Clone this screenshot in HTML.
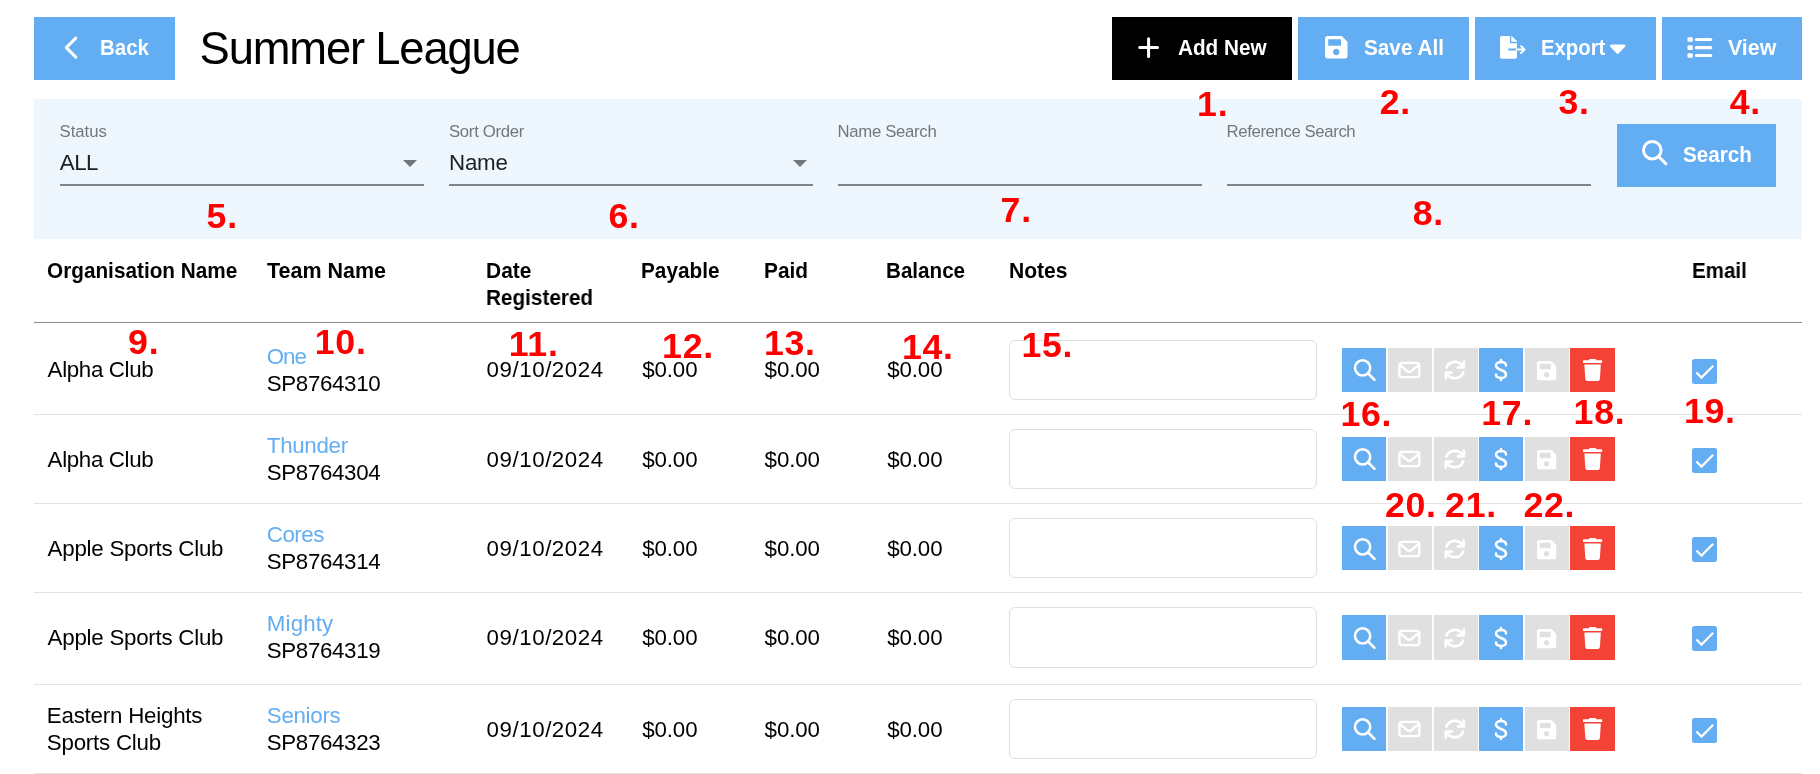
<!DOCTYPE html>
<html lang="en">
<head>
<meta charset="utf-8">
<title>Summer League</title>
<style>
html,body{margin:0;padding:0;background:#fff;}
body{width:1820px;height:774px;position:relative;overflow:hidden;font-family:"Liberation Sans",sans-serif;color:#000;}
#app{position:absolute;left:0;top:0;width:1820px;height:774px;will-change:transform;}
#app *{box-sizing:border-box;}
.toolbar,.filters,.grid,.thead,.row,.field,.t,.btn,.ib,.ta,.cb,.inp,.ul,.ann,svg{position:absolute;margin:0;padding:0;}
.t{white-space:pre;font-weight:400;display:block;transform-origin:0 0;}
button{border:0;font:inherit;color:inherit;text-align:left;overflow:visible;border-radius:0;cursor:pointer;}
.btn{background:#63adf2;color:#fff;height:63px;top:17px;}
.btn.dark{background:#000;}
.toolbar{left:0;top:0;width:1820px;height:99px;}
.filters{left:34px;top:99px;width:1768px;height:140px;background:#eef6fe;}
.field{top:0;width:364px;height:140px;}
.ul{left:0;top:85px;width:364px;height:2px;background:#81868b;}
.inp{left:0;top:48px;width:364px;height:39px;border:0;border-bottom:2px solid #81868b;background:transparent;outline:0;font:inherit;}
.grid{left:34px;top:239px;width:1768px;height:535px;}
.thead{left:0;top:0;width:1768px;height:84px;border-bottom:1px solid #8c8c8c;}
.row{left:0;width:1768px;border-bottom:1px solid #e2e2e2;}
.ib{width:44px;} .ib.b{background:#63adf2;} .ib.g{background:#e0e0e0;} .ib.r{background:#f44336;}
.ta{left:975px;width:308px;border:1px solid #dedede;border-radius:6px;background:#fff;resize:none;overflow:hidden;outline:0;font:inherit;}
.cb{left:1658px;width:25px;height:25px;border-radius:2.5px;background:#63adf2;}
.link{color:#63adf2;text-decoration:none;}
.ann{white-space:pre;font-weight:700;font-size:35.7px;line-height:42px;color:#ff0000;letter-spacing:0.7px;}
svg{overflow:visible;display:block;}
</style>
</head>
<body>
<div id="app">

<header class="toolbar">
<button type="button" class="btn" style="left:34px;width:141px"><svg aria-hidden="true" style="left:0;top:0" width="1" height="1"><g transform="translate(-34 -17)"><path d="M75.8 38.1L66.3 47.6L75.8 57.1" fill="none" stroke="#fff" stroke-width="3" stroke-linecap="round" stroke-linejoin="round"/></g></svg><span class="t" style="left:66.20px;top:17px;font-size:22.31px;line-height:27px;transform:scaleX(0.9197);font-weight:700">Back</span></button>
<h1 class="t" style="left:199.60px;top:22px;font-size:45.32px;line-height:53px;letter-spacing:-1.156px">Summer League</h1>
<button type="button" class="btn dark" style="left:1112px;width:180px"><svg aria-hidden="true" style="left:0;top:0" width="1" height="1"><g transform="translate(-1112 -17)"><path d="M1139.7 47.6H1157.5M1148.6 38.7V56.5" fill="none" stroke="#fff" stroke-width="3" stroke-linecap="round"/></g></svg><span class="t" style="left:65.80px;top:17px;font-size:22.31px;line-height:27px;transform:scaleX(0.9287);font-weight:700">Add New</span></button>
<button type="button" class="btn" style="left:1298px;width:171px"><svg aria-hidden="true" style="left:27.20px;top:19.20px" width="22.50" height="22.50" viewBox="0 32 448 448"><path fill="#fff" d="M433.941 129.941l-83.882-83.882A48 48 0 0 0 316.118 32H48C21.49 32 0 53.49 0 80v352c0 26.51 21.49 48 48 48h352c26.51 0 48-21.49 48-48V163.882a48 48 0 0 0-14.059-33.941zM224 416c-35.346 0-64-28.654-64-64 0-35.346 28.654-64 64-64s64 28.654 64 64c0 35.346-28.654 64-64 64zm96-304.52V212c0 6.627-5.373 12-12 12H76c-6.627 0-12-5.373-12-12V108c0-6.627 5.373-12 12-12h228.52c3.183 0 6.235 1.264 8.485 3.515l3.48 3.48A11.996 11.996 0 0 1 320 111.48z"/></svg><span class="t" style="left:66.00px;top:17px;font-size:22.31px;line-height:27px;transform:scaleX(0.9302);font-weight:700">Save All</span></button>
<button type="button" class="btn" style="left:1475px;width:181px"><svg aria-hidden="true" style="left:24.90px;top:19.10px" width="25.40" height="22.80" viewBox="0 0 576 512"><path fill="#fff" d="M40 0H224V136a24 24 0 0 0 24 24H384V280H200a16 16 0 0 0-16 16v16a16 16 0 0 0 16 16H384V472a40 40 0 0 1-40 40H40a40 40 0 0 1-40-40V40A40 40 0 0 1 40 0z"/><path fill="#fff" d="M256 0h6a24 24 0 0 1 17 7L377 105a24 24 0 0 1 7 17V128H256z"/><path fill="none" stroke="#fff" stroke-width="44" stroke-linecap="round" stroke-linejoin="round" d="M384 304H540M478 226L556 304L478 382"/></svg><svg aria-hidden="true" style="left:0;top:0" width="1" height="1"><g transform="translate(-1475 -17)"><path d="M1611.2 44.6H1624.1a1.3 1.3 0 0 1 .95 2.2L1618.6 53.6a1.4 1.4 0 0 1-1.9 0L1610.25 46.8a1.3 1.3 0 0 1 .95-2.2z" fill="#fff"/></g></svg><span class="t" style="left:66.00px;top:17px;font-size:22.31px;line-height:27px;transform:scaleX(0.9119);font-weight:700">Export</span></button>
<button type="button" class="btn" style="left:1662px;width:140px"><svg aria-hidden="true" style="left:0;top:0" width="1" height="1"><g transform="translate(-1662 -17)"><rect x="1687.5" y="37.15" width="5.3" height="4.7" rx="1.2" fill="#fff"/><rect x="1694.8" y="37.90" width="17.5" height="3.2" rx="1.6" fill="#fff"/><rect x="1687.5" y="45.35" width="5.3" height="4.7" rx="1.2" fill="#fff"/><rect x="1694.8" y="46.10" width="17.5" height="3.2" rx="1.6" fill="#fff"/><rect x="1687.5" y="53.15" width="5.3" height="4.7" rx="1.2" fill="#fff"/><rect x="1694.8" y="53.90" width="17.5" height="3.2" rx="1.6" fill="#fff"/></g></svg><span class="t" style="left:66.20px;top:17px;font-size:22.31px;line-height:27px;transform:scaleX(0.9566);font-weight:700">View</span></button>
</header>
<section class="filters">
<div class="field" style="left:26px">
<label class="t" style="left:-0.40px;top:22px;font-size:16.73px;line-height:21px;letter-spacing:-0.036px;color:#74787c">Status</label>
<span class="t val" role="combobox" style="left:-0.20px;top:50px;font-size:22.31px;line-height:27px;letter-spacing:-0.542px;color:#1d1f21">ALL</span>
<svg aria-hidden="true" style="left:0;top:0" width="1" height="1"><g transform="translate(-60 -99)"><path d="M403 160h14l-7 7z" fill="#71767b"/></g></svg>
<div class="ul"></div>
</div>
<div class="field" style="left:415px">
<label class="t" style="left:0.00px;top:22px;font-size:16.73px;line-height:21px;letter-spacing:-0.291px;color:#74787c">Sort Order</label>
<span class="t val" role="combobox" style="left:0.00px;top:50px;font-size:22.31px;line-height:27px;letter-spacing:-0.215px;color:#1d1f21">Name</span>
<svg aria-hidden="true" style="left:0;top:0" width="1" height="1"><g transform="translate(-449 -99)"><path d="M793 160h14l-7 7z" fill="#71767b"/></g></svg>
<div class="ul"></div>
</div>
<div class="field" style="left:804px">
<label class="t" style="left:-0.40px;top:22px;font-size:16.73px;line-height:21px;letter-spacing:-0.315px;color:#74787c">Name Search</label>
<input class="inp" type="text" value="">
</div>
<div class="field" style="left:1193px">
<label class="t" style="left:-0.40px;top:22px;font-size:16.73px;line-height:21px;letter-spacing:-0.380px;color:#74787c">Reference Search</label>
<input class="inp" type="text" value="">
</div>
<button type="button" class="btn" style="left:1583px;top:25px;width:159px"><svg aria-hidden="true" style="left:0;top:0" width="1" height="1"><g transform="translate(-1617 -124)"><circle cx="1652.3" cy="150.2" r="8.8" fill="none" stroke="#fff" stroke-width="3"/><path d="M1658.7 156.6L1665.9 163.8" stroke="#fff" stroke-width="3" stroke-linecap="round"/></g></svg><span class="t" style="left:65.60px;top:17px;font-size:22.31px;line-height:27px;transform:scaleX(0.9256);font-weight:700">Search</span></button>
</section>
<div class="grid" role="table">
<div class="thead" role="row">
<span class="t" role="columnheader" style="left:12.60px;top:18px;font-size:22.31px;line-height:27px;transform:scaleX(0.9308);font-weight:700">Organisation Name</span>
<span class="t" role="columnheader" style="left:232.60px;top:18px;font-size:22.31px;line-height:27px;transform:scaleX(0.9639);font-weight:700">Team Name</span>
<span class="t" role="columnheader" style="left:452.40px;top:18px;font-size:22.31px;line-height:27px;transform:scaleX(0.9395);font-weight:700">Date</span>
<span class="t" role="columnheader" style="left:607.40px;top:18px;font-size:22.31px;line-height:27px;transform:scaleX(0.9307);font-weight:700">Payable</span>
<span class="t" role="columnheader" style="left:729.80px;top:18px;font-size:22.31px;line-height:27px;transform:scaleX(0.9353);font-weight:700">Paid</span>
<span class="t" role="columnheader" style="left:852.40px;top:18px;font-size:22.31px;line-height:27px;transform:scaleX(0.9247);font-weight:700">Balance</span>
<span class="t" role="columnheader" style="left:974.60px;top:18px;font-size:22.31px;line-height:27px;transform:scaleX(0.9455);font-weight:700">Notes</span>
<span class="t" role="columnheader" style="left:1658.40px;top:18px;font-size:22.31px;line-height:27px;transform:scaleX(0.9220);font-weight:700">Email</span>
<span class="t" style="left:452.40px;top:45px;font-size:22.31px;line-height:27px;transform:scaleX(0.9295);font-weight:700">Registered</span>
</div>
<div class="row" role="row" style="top:84px;height:92px">
<span class="t" style="left:13.60px;top:33px;font-size:22.31px;line-height:27px;letter-spacing:-0.334px">Alpha Club</span>
<a class="t link" style="left:232.80px;top:20px;font-size:22.31px;line-height:27px;letter-spacing:-1.068px">One</a>
<span class="t" style="left:232.80px;top:47px;font-size:22.31px;line-height:27px;letter-spacing:-0.340px">SP8764310</span>
<span class="t" style="left:452.60px;top:33px;font-size:22.31px;line-height:27px;letter-spacing:0.548px">09/10/2024</span>
<span class="t" style="left:608.20px;top:33px;font-size:22.31px;line-height:27px;letter-spacing:-0.106px">$0.00</span>
<span class="t" style="left:730.60px;top:33px;font-size:22.31px;line-height:27px;letter-spacing:-0.106px">$0.00</span>
<span class="t" style="left:853.20px;top:33px;font-size:22.31px;line-height:27px;letter-spacing:-0.106px">$0.00</span>
<textarea class="ta" rows="2" style="top:17px;height:60px"></textarea>
<button type="button" class="ib b" aria-label="View" style="left:1308px;top:25px;width:44px;height:44px"><svg aria-hidden="true" style="left:0;top:0px" width="44" height="44"><circle cx="20.6" cy="19.9" r="7.6" fill="none" stroke="#fff" stroke-width="2.6"/><path d="M26.2 25.5L32.5 31.8" stroke="#fff" stroke-width="2.6" stroke-linecap="round"/></svg></button>
<button type="button" class="ib g" aria-label="Email" disabled style="left:1354px;top:25px;width:44px;height:44px"><svg aria-hidden="true" style="left:0;top:0px" width="44" height="44"><rect x="11.4" y="14.9" width="19.9" height="14.2" rx="2.4" fill="none" stroke="#fff" stroke-width="2.4"/><path d="M12.2 17.3L19.4 23.2Q21.4 24.8 23.3 23.2L30.5 17.3" fill="none" stroke="#fff" stroke-width="2.4" stroke-linejoin="round"/></svg></button>
<button type="button" class="ib g" aria-label="Refresh" disabled style="left:1400px;top:25px;width:44px;height:44px"><svg aria-hidden="true" style="left:0;top:0px" width="44" height="44"><g fill="none" stroke="#fff" stroke-width="2.7" stroke-linecap="round" stroke-linejoin="round"><path d="M12.4 19.6A9.1 9.1 0 0 1 28.4 17.8"/><path d="M29.8 13.6V19.4H24.0"/><path d="M29.2 24.4A9.1 9.1 0 0 1 13.2 26.2"/><path d="M11.8 30.4V24.6H17.6"/></g></svg></button>
<button type="button" class="ib b" aria-label="Payment" style="left:1445px;top:25px;width:44px;height:44px"><svg aria-hidden="true" style="left:0;top:0px" width="44" height="44"><g fill="none" stroke="#fff" stroke-width="2.5" stroke-linecap="round"><path d="M22.0 12.1V14.0M22.0 30.0V31.9"/><path d="M27.0 17.4C27.0 14.6 24.3 14.0 22.0 14.0C19.3 14.0 17.0 15.4 17.0 17.6C17.0 20.4 20.0 21.2 22.0 22.0C24.0 22.8 27.0 23.6 27.0 26.4C27.0 28.6 24.7 30.0 22.0 30.0C19.7 30.0 17.0 29.4 17.0 26.6"/></g></svg></button>
<button type="button" class="ib g" aria-label="Save" disabled style="left:1491px;top:25px;width:44px;height:44px"><svg aria-hidden="true" style="left:11.90px;top:12.70px" width="19.20" height="19.20" viewBox="0 32 448 448"><path fill="#fff" d="M433.941 129.941l-83.882-83.882A48 48 0 0 0 316.118 32H48C21.49 32 0 53.49 0 80v352c0 26.51 21.49 48 48 48h352c26.51 0 48-21.49 48-48V163.882a48 48 0 0 0-14.059-33.941zM224 416c-35.346 0-64-28.654-64-64 0-35.346 28.654-64 64-64s64 28.654 64 64c0 35.346-28.654 64-64 64zm96-304.52V212c0 6.627-5.373 12-12 12H76c-6.627 0-12-5.373-12-12V108c0-6.627 5.373-12 12-12h228.52c3.183 0 6.235 1.264 8.485 3.515l3.48 3.48A11.996 11.996 0 0 1 320 111.48z"/></svg></button>
<button type="button" class="ib r" aria-label="Delete" style="left:1536px;top:25px;width:45px;height:44px"><svg aria-hidden="true" style="left:12.90px;top:11.10px" width="19.20" height="21.90" viewBox="0 0 448 512"><path fill="#fff" d="M432 32H312l-9.4-18.7A24 24 0 0 0 281.1 0H166.8a23.72 23.72 0 0 0-21.4 13.3L136 32H16A16 16 0 0 0 0 48v32a16 16 0 0 0 16 16h416a16 16 0 0 0 16-16V48a16 16 0 0 0-16-16zM53.2 467a48 48 0 0 0 47.9 45h245.8a48 48 0 0 0 47.9-45L416 128H32z"/></svg></button>
<span class="cb" role="checkbox" aria-checked="true" style="top:36px"><svg aria-hidden="true" style="left:0;top:0" width="25" height="25"><path d="M4.4 13.4L9.5 18.6L21.2 6.8" fill="none" stroke="#fff" stroke-width="2.2"/></svg></span>
</div>
<div class="row" role="row" style="top:176px;height:89px">
<span class="t" style="left:13.60px;top:31px;font-size:22.31px;line-height:27px;letter-spacing:-0.334px">Alpha Club</span>
<a class="t link" style="left:232.80px;top:17px;font-size:22.31px;line-height:27px;letter-spacing:-0.286px">Thunder</a>
<span class="t" style="left:232.80px;top:44px;font-size:22.31px;line-height:27px;letter-spacing:-0.340px">SP8764304</span>
<span class="t" style="left:452.60px;top:31px;font-size:22.31px;line-height:27px;letter-spacing:0.548px">09/10/2024</span>
<span class="t" style="left:608.20px;top:31px;font-size:22.31px;line-height:27px;letter-spacing:-0.106px">$0.00</span>
<span class="t" style="left:730.60px;top:31px;font-size:22.31px;line-height:27px;letter-spacing:-0.106px">$0.00</span>
<span class="t" style="left:853.20px;top:31px;font-size:22.31px;line-height:27px;letter-spacing:-0.106px">$0.00</span>
<textarea class="ta" rows="2" style="top:14px;height:60px"></textarea>
<button type="button" class="ib b" aria-label="View" style="left:1308px;top:22px;width:44px;height:44px"><svg aria-hidden="true" style="left:0;top:0px" width="44" height="44"><circle cx="20.6" cy="19.9" r="7.6" fill="none" stroke="#fff" stroke-width="2.6"/><path d="M26.2 25.5L32.5 31.8" stroke="#fff" stroke-width="2.6" stroke-linecap="round"/></svg></button>
<button type="button" class="ib g" aria-label="Email" disabled style="left:1354px;top:22px;width:44px;height:44px"><svg aria-hidden="true" style="left:0;top:0px" width="44" height="44"><rect x="11.4" y="14.9" width="19.9" height="14.2" rx="2.4" fill="none" stroke="#fff" stroke-width="2.4"/><path d="M12.2 17.3L19.4 23.2Q21.4 24.8 23.3 23.2L30.5 17.3" fill="none" stroke="#fff" stroke-width="2.4" stroke-linejoin="round"/></svg></button>
<button type="button" class="ib g" aria-label="Refresh" disabled style="left:1400px;top:22px;width:44px;height:44px"><svg aria-hidden="true" style="left:0;top:0px" width="44" height="44"><g fill="none" stroke="#fff" stroke-width="2.7" stroke-linecap="round" stroke-linejoin="round"><path d="M12.4 19.6A9.1 9.1 0 0 1 28.4 17.8"/><path d="M29.8 13.6V19.4H24.0"/><path d="M29.2 24.4A9.1 9.1 0 0 1 13.2 26.2"/><path d="M11.8 30.4V24.6H17.6"/></g></svg></button>
<button type="button" class="ib b" aria-label="Payment" style="left:1445px;top:22px;width:44px;height:44px"><svg aria-hidden="true" style="left:0;top:0px" width="44" height="44"><g fill="none" stroke="#fff" stroke-width="2.5" stroke-linecap="round"><path d="M22.0 12.1V14.0M22.0 30.0V31.9"/><path d="M27.0 17.4C27.0 14.6 24.3 14.0 22.0 14.0C19.3 14.0 17.0 15.4 17.0 17.6C17.0 20.4 20.0 21.2 22.0 22.0C24.0 22.8 27.0 23.6 27.0 26.4C27.0 28.6 24.7 30.0 22.0 30.0C19.7 30.0 17.0 29.4 17.0 26.6"/></g></svg></button>
<button type="button" class="ib g" aria-label="Save" disabled style="left:1491px;top:22px;width:44px;height:44px"><svg aria-hidden="true" style="left:11.90px;top:12.70px" width="19.20" height="19.20" viewBox="0 32 448 448"><path fill="#fff" d="M433.941 129.941l-83.882-83.882A48 48 0 0 0 316.118 32H48C21.49 32 0 53.49 0 80v352c0 26.51 21.49 48 48 48h352c26.51 0 48-21.49 48-48V163.882a48 48 0 0 0-14.059-33.941zM224 416c-35.346 0-64-28.654-64-64 0-35.346 28.654-64 64-64s64 28.654 64 64c0 35.346-28.654 64-64 64zm96-304.52V212c0 6.627-5.373 12-12 12H76c-6.627 0-12-5.373-12-12V108c0-6.627 5.373-12 12-12h228.52c3.183 0 6.235 1.264 8.485 3.515l3.48 3.48A11.996 11.996 0 0 1 320 111.48z"/></svg></button>
<button type="button" class="ib r" aria-label="Delete" style="left:1536px;top:22px;width:45px;height:44px"><svg aria-hidden="true" style="left:12.90px;top:11.10px" width="19.20" height="21.90" viewBox="0 0 448 512"><path fill="#fff" d="M432 32H312l-9.4-18.7A24 24 0 0 0 281.1 0H166.8a23.72 23.72 0 0 0-21.4 13.3L136 32H16A16 16 0 0 0 0 48v32a16 16 0 0 0 16 16h416a16 16 0 0 0 16-16V48a16 16 0 0 0-16-16zM53.2 467a48 48 0 0 0 47.9 45h245.8a48 48 0 0 0 47.9-45L416 128H32z"/></svg></button>
<span class="cb" role="checkbox" aria-checked="true" style="top:33px"><svg aria-hidden="true" style="left:0;top:0" width="25" height="25"><path d="M4.4 13.4L9.5 18.6L21.2 6.8" fill="none" stroke="#fff" stroke-width="2.2"/></svg></span>
</div>
<div class="row" role="row" style="top:265px;height:89px">
<span class="t" style="left:13.60px;top:31px;font-size:22.31px;line-height:27px;letter-spacing:-0.239px">Apple Sports Club</span>
<a class="t link" style="left:232.80px;top:17px;font-size:22.31px;line-height:27px;letter-spacing:-0.469px">Cores</a>
<span class="t" style="left:232.80px;top:44px;font-size:22.31px;line-height:27px;letter-spacing:-0.340px">SP8764314</span>
<span class="t" style="left:452.60px;top:31px;font-size:22.31px;line-height:27px;letter-spacing:0.548px">09/10/2024</span>
<span class="t" style="left:608.20px;top:31px;font-size:22.31px;line-height:27px;letter-spacing:-0.106px">$0.00</span>
<span class="t" style="left:730.60px;top:31px;font-size:22.31px;line-height:27px;letter-spacing:-0.106px">$0.00</span>
<span class="t" style="left:853.20px;top:31px;font-size:22.31px;line-height:27px;letter-spacing:-0.106px">$0.00</span>
<textarea class="ta" rows="2" style="top:14px;height:60px"></textarea>
<button type="button" class="ib b" aria-label="View" style="left:1308px;top:22px;width:44px;height:44px"><svg aria-hidden="true" style="left:0;top:0.9px" width="44" height="44"><circle cx="20.6" cy="19.9" r="7.6" fill="none" stroke="#fff" stroke-width="2.6"/><path d="M26.2 25.5L32.5 31.8" stroke="#fff" stroke-width="2.6" stroke-linecap="round"/></svg></button>
<button type="button" class="ib g" aria-label="Email" disabled style="left:1354px;top:22px;width:44px;height:44px"><svg aria-hidden="true" style="left:0;top:0.9px" width="44" height="44"><rect x="11.4" y="14.9" width="19.9" height="14.2" rx="2.4" fill="none" stroke="#fff" stroke-width="2.4"/><path d="M12.2 17.3L19.4 23.2Q21.4 24.8 23.3 23.2L30.5 17.3" fill="none" stroke="#fff" stroke-width="2.4" stroke-linejoin="round"/></svg></button>
<button type="button" class="ib g" aria-label="Refresh" disabled style="left:1400px;top:22px;width:44px;height:44px"><svg aria-hidden="true" style="left:0;top:0.9px" width="44" height="44"><g fill="none" stroke="#fff" stroke-width="2.7" stroke-linecap="round" stroke-linejoin="round"><path d="M12.4 19.6A9.1 9.1 0 0 1 28.4 17.8"/><path d="M29.8 13.6V19.4H24.0"/><path d="M29.2 24.4A9.1 9.1 0 0 1 13.2 26.2"/><path d="M11.8 30.4V24.6H17.6"/></g></svg></button>
<button type="button" class="ib b" aria-label="Payment" style="left:1445px;top:22px;width:44px;height:44px"><svg aria-hidden="true" style="left:0;top:0.9px" width="44" height="44"><g fill="none" stroke="#fff" stroke-width="2.5" stroke-linecap="round"><path d="M22.0 12.1V14.0M22.0 30.0V31.9"/><path d="M27.0 17.4C27.0 14.6 24.3 14.0 22.0 14.0C19.3 14.0 17.0 15.4 17.0 17.6C17.0 20.4 20.0 21.2 22.0 22.0C24.0 22.8 27.0 23.6 27.0 26.4C27.0 28.6 24.7 30.0 22.0 30.0C19.7 30.0 17.0 29.4 17.0 26.6"/></g></svg></button>
<button type="button" class="ib g" aria-label="Save" disabled style="left:1491px;top:22px;width:44px;height:44px"><svg aria-hidden="true" style="left:11.90px;top:13.60px" width="19.20" height="19.20" viewBox="0 32 448 448"><path fill="#fff" d="M433.941 129.941l-83.882-83.882A48 48 0 0 0 316.118 32H48C21.49 32 0 53.49 0 80v352c0 26.51 21.49 48 48 48h352c26.51 0 48-21.49 48-48V163.882a48 48 0 0 0-14.059-33.941zM224 416c-35.346 0-64-28.654-64-64 0-35.346 28.654-64 64-64s64 28.654 64 64c0 35.346-28.654 64-64 64zm96-304.52V212c0 6.627-5.373 12-12 12H76c-6.627 0-12-5.373-12-12V108c0-6.627 5.373-12 12-12h228.52c3.183 0 6.235 1.264 8.485 3.515l3.48 3.48A11.996 11.996 0 0 1 320 111.48z"/></svg></button>
<button type="button" class="ib r" aria-label="Delete" style="left:1536px;top:22px;width:45px;height:44px"><svg aria-hidden="true" style="left:12.90px;top:12.00px" width="19.20" height="21.90" viewBox="0 0 448 512"><path fill="#fff" d="M432 32H312l-9.4-18.7A24 24 0 0 0 281.1 0H166.8a23.72 23.72 0 0 0-21.4 13.3L136 32H16A16 16 0 0 0 0 48v32a16 16 0 0 0 16 16h416a16 16 0 0 0 16-16V48a16 16 0 0 0-16-16zM53.2 467a48 48 0 0 0 47.9 45h245.8a48 48 0 0 0 47.9-45L416 128H32z"/></svg></button>
<span class="cb" role="checkbox" aria-checked="true" style="top:33px"><svg aria-hidden="true" style="left:0;top:0" width="25" height="25"><path d="M4.4 13.4L9.5 18.6L21.2 6.8" fill="none" stroke="#fff" stroke-width="2.2"/></svg></span>
</div>
<div class="row" role="row" style="top:354px;height:92px">
<span class="t" style="left:13.60px;top:31px;font-size:22.31px;line-height:27px;letter-spacing:-0.239px">Apple Sports Club</span>
<a class="t link" style="left:232.80px;top:17px;font-size:22.31px;line-height:27px;letter-spacing:0.161px">Mighty</a>
<span class="t" style="left:232.80px;top:44px;font-size:22.31px;line-height:27px;letter-spacing:-0.340px">SP8764319</span>
<span class="t" style="left:452.60px;top:31px;font-size:22.31px;line-height:27px;letter-spacing:0.548px">09/10/2024</span>
<span class="t" style="left:608.20px;top:31px;font-size:22.31px;line-height:27px;letter-spacing:-0.106px">$0.00</span>
<span class="t" style="left:730.60px;top:31px;font-size:22.31px;line-height:27px;letter-spacing:-0.106px">$0.00</span>
<span class="t" style="left:853.20px;top:31px;font-size:22.31px;line-height:27px;letter-spacing:-0.106px">$0.00</span>
<textarea class="ta" rows="2" style="top:14px;height:61px"></textarea>
<button type="button" class="ib b" aria-label="View" style="left:1308px;top:22px;width:44px;height:45px"><svg aria-hidden="true" style="left:0;top:1px" width="44" height="44"><circle cx="20.6" cy="19.9" r="7.6" fill="none" stroke="#fff" stroke-width="2.6"/><path d="M26.2 25.5L32.5 31.8" stroke="#fff" stroke-width="2.6" stroke-linecap="round"/></svg></button>
<button type="button" class="ib g" aria-label="Email" disabled style="left:1354px;top:22px;width:44px;height:45px"><svg aria-hidden="true" style="left:0;top:1px" width="44" height="44"><rect x="11.4" y="14.9" width="19.9" height="14.2" rx="2.4" fill="none" stroke="#fff" stroke-width="2.4"/><path d="M12.2 17.3L19.4 23.2Q21.4 24.8 23.3 23.2L30.5 17.3" fill="none" stroke="#fff" stroke-width="2.4" stroke-linejoin="round"/></svg></button>
<button type="button" class="ib g" aria-label="Refresh" disabled style="left:1400px;top:22px;width:44px;height:45px"><svg aria-hidden="true" style="left:0;top:1px" width="44" height="44"><g fill="none" stroke="#fff" stroke-width="2.7" stroke-linecap="round" stroke-linejoin="round"><path d="M12.4 19.6A9.1 9.1 0 0 1 28.4 17.8"/><path d="M29.8 13.6V19.4H24.0"/><path d="M29.2 24.4A9.1 9.1 0 0 1 13.2 26.2"/><path d="M11.8 30.4V24.6H17.6"/></g></svg></button>
<button type="button" class="ib b" aria-label="Payment" style="left:1445px;top:22px;width:44px;height:45px"><svg aria-hidden="true" style="left:0;top:1px" width="44" height="44"><g fill="none" stroke="#fff" stroke-width="2.5" stroke-linecap="round"><path d="M22.0 12.1V14.0M22.0 30.0V31.9"/><path d="M27.0 17.4C27.0 14.6 24.3 14.0 22.0 14.0C19.3 14.0 17.0 15.4 17.0 17.6C17.0 20.4 20.0 21.2 22.0 22.0C24.0 22.8 27.0 23.6 27.0 26.4C27.0 28.6 24.7 30.0 22.0 30.0C19.7 30.0 17.0 29.4 17.0 26.6"/></g></svg></button>
<button type="button" class="ib g" aria-label="Save" disabled style="left:1491px;top:22px;width:44px;height:45px"><svg aria-hidden="true" style="left:11.90px;top:13.70px" width="19.20" height="19.20" viewBox="0 32 448 448"><path fill="#fff" d="M433.941 129.941l-83.882-83.882A48 48 0 0 0 316.118 32H48C21.49 32 0 53.49 0 80v352c0 26.51 21.49 48 48 48h352c26.51 0 48-21.49 48-48V163.882a48 48 0 0 0-14.059-33.941zM224 416c-35.346 0-64-28.654-64-64 0-35.346 28.654-64 64-64s64 28.654 64 64c0 35.346-28.654 64-64 64zm96-304.52V212c0 6.627-5.373 12-12 12H76c-6.627 0-12-5.373-12-12V108c0-6.627 5.373-12 12-12h228.52c3.183 0 6.235 1.264 8.485 3.515l3.48 3.48A11.996 11.996 0 0 1 320 111.48z"/></svg></button>
<button type="button" class="ib r" aria-label="Delete" style="left:1536px;top:22px;width:45px;height:45px"><svg aria-hidden="true" style="left:12.90px;top:12.10px" width="19.20" height="21.90" viewBox="0 0 448 512"><path fill="#fff" d="M432 32H312l-9.4-18.7A24 24 0 0 0 281.1 0H166.8a23.72 23.72 0 0 0-21.4 13.3L136 32H16A16 16 0 0 0 0 48v32a16 16 0 0 0 16 16h416a16 16 0 0 0 16-16V48a16 16 0 0 0-16-16zM53.2 467a48 48 0 0 0 47.9 45h245.8a48 48 0 0 0 47.9-45L416 128H32z"/></svg></button>
<span class="cb" role="checkbox" aria-checked="true" style="top:33px"><svg aria-hidden="true" style="left:0;top:0" width="25" height="25"><path d="M4.4 13.4L9.5 18.6L21.2 6.8" fill="none" stroke="#fff" stroke-width="2.2"/></svg></span>
</div>
<div class="row" role="row" style="top:446px;height:89px">
<span class="t" style="left:12.80px;top:17px;font-size:22.31px;line-height:27px;letter-spacing:-0.210px">Eastern Heights</span>
<span class="t" style="left:12.80px;top:44px;font-size:22.31px;line-height:27px;letter-spacing:-0.216px">Sports Club</span>
<a class="t link" style="left:232.80px;top:17px;font-size:22.31px;line-height:27px;letter-spacing:-0.288px">Seniors</a>
<span class="t" style="left:232.80px;top:44px;font-size:22.31px;line-height:27px;letter-spacing:-0.340px">SP8764323</span>
<span class="t" style="left:452.60px;top:31px;font-size:22.31px;line-height:27px;letter-spacing:0.548px">09/10/2024</span>
<span class="t" style="left:608.20px;top:31px;font-size:22.31px;line-height:27px;letter-spacing:-0.106px">$0.00</span>
<span class="t" style="left:730.60px;top:31px;font-size:22.31px;line-height:27px;letter-spacing:-0.106px">$0.00</span>
<span class="t" style="left:853.20px;top:31px;font-size:22.31px;line-height:27px;letter-spacing:-0.106px">$0.00</span>
<textarea class="ta" rows="2" style="top:14px;height:60px"></textarea>
<button type="button" class="ib b" aria-label="View" style="left:1308px;top:22px;width:44px;height:44px"><svg aria-hidden="true" style="left:0;top:0px" width="44" height="44"><circle cx="20.6" cy="19.9" r="7.6" fill="none" stroke="#fff" stroke-width="2.6"/><path d="M26.2 25.5L32.5 31.8" stroke="#fff" stroke-width="2.6" stroke-linecap="round"/></svg></button>
<button type="button" class="ib g" aria-label="Email" disabled style="left:1354px;top:22px;width:44px;height:44px"><svg aria-hidden="true" style="left:0;top:0px" width="44" height="44"><rect x="11.4" y="14.9" width="19.9" height="14.2" rx="2.4" fill="none" stroke="#fff" stroke-width="2.4"/><path d="M12.2 17.3L19.4 23.2Q21.4 24.8 23.3 23.2L30.5 17.3" fill="none" stroke="#fff" stroke-width="2.4" stroke-linejoin="round"/></svg></button>
<button type="button" class="ib g" aria-label="Refresh" disabled style="left:1400px;top:22px;width:44px;height:44px"><svg aria-hidden="true" style="left:0;top:0px" width="44" height="44"><g fill="none" stroke="#fff" stroke-width="2.7" stroke-linecap="round" stroke-linejoin="round"><path d="M12.4 19.6A9.1 9.1 0 0 1 28.4 17.8"/><path d="M29.8 13.6V19.4H24.0"/><path d="M29.2 24.4A9.1 9.1 0 0 1 13.2 26.2"/><path d="M11.8 30.4V24.6H17.6"/></g></svg></button>
<button type="button" class="ib b" aria-label="Payment" style="left:1445px;top:22px;width:44px;height:44px"><svg aria-hidden="true" style="left:0;top:0px" width="44" height="44"><g fill="none" stroke="#fff" stroke-width="2.5" stroke-linecap="round"><path d="M22.0 12.1V14.0M22.0 30.0V31.9"/><path d="M27.0 17.4C27.0 14.6 24.3 14.0 22.0 14.0C19.3 14.0 17.0 15.4 17.0 17.6C17.0 20.4 20.0 21.2 22.0 22.0C24.0 22.8 27.0 23.6 27.0 26.4C27.0 28.6 24.7 30.0 22.0 30.0C19.7 30.0 17.0 29.4 17.0 26.6"/></g></svg></button>
<button type="button" class="ib g" aria-label="Save" disabled style="left:1491px;top:22px;width:44px;height:44px"><svg aria-hidden="true" style="left:11.90px;top:12.70px" width="19.20" height="19.20" viewBox="0 32 448 448"><path fill="#fff" d="M433.941 129.941l-83.882-83.882A48 48 0 0 0 316.118 32H48C21.49 32 0 53.49 0 80v352c0 26.51 21.49 48 48 48h352c26.51 0 48-21.49 48-48V163.882a48 48 0 0 0-14.059-33.941zM224 416c-35.346 0-64-28.654-64-64 0-35.346 28.654-64 64-64s64 28.654 64 64c0 35.346-28.654 64-64 64zm96-304.52V212c0 6.627-5.373 12-12 12H76c-6.627 0-12-5.373-12-12V108c0-6.627 5.373-12 12-12h228.52c3.183 0 6.235 1.264 8.485 3.515l3.48 3.48A11.996 11.996 0 0 1 320 111.48z"/></svg></button>
<button type="button" class="ib r" aria-label="Delete" style="left:1536px;top:22px;width:45px;height:44px"><svg aria-hidden="true" style="left:12.90px;top:11.10px" width="19.20" height="21.90" viewBox="0 0 448 512"><path fill="#fff" d="M432 32H312l-9.4-18.7A24 24 0 0 0 281.1 0H166.8a23.72 23.72 0 0 0-21.4 13.3L136 32H16A16 16 0 0 0 0 48v32a16 16 0 0 0 16 16h416a16 16 0 0 0 16-16V48a16 16 0 0 0-16-16zM53.2 467a48 48 0 0 0 47.9 45h245.8a48 48 0 0 0 47.9-45L416 128H32z"/></svg></button>
<span class="cb" role="checkbox" aria-checked="true" style="top:33px"><svg aria-hidden="true" style="left:0;top:0" width="25" height="25"><path d="M4.4 13.4L9.5 18.6L21.2 6.8" fill="none" stroke="#fff" stroke-width="2.2"/></svg></span>
</div>
</div>
<div class="callouts">
<span class="ann" style="left:1197.1px;top:83px">1.</span>
<span class="ann" style="left:1379.7px;top:81px">2.</span>
<span class="ann" style="left:1558.4px;top:81px">3.</span>
<span class="ann" style="left:1729.8px;top:81px">4.</span>
<span class="ann" style="left:206.6px;top:195px">5.</span>
<span class="ann" style="left:608.5px;top:195px">6.</span>
<span class="ann" style="left:1000.6px;top:189px">7.</span>
<span class="ann" style="left:1412.8px;top:192px">8.</span>
<span class="ann" style="left:128.1px;top:321px">9.</span>
<span class="ann" style="left:314.8px;top:321px">10.</span>
<span class="ann" style="left:508.8px;top:323px">11.</span>
<span class="ann" style="left:662.1px;top:325px">12.</span>
<span class="ann" style="left:764.0px;top:322px">13.</span>
<span class="ann" style="left:902.0px;top:326px">14.</span>
<span class="ann" style="left:1021.4px;top:324px">15.</span>
<span class="ann" style="left:1340.4px;top:393px">16.</span>
<span class="ann" style="left:1481.3px;top:392px">17.</span>
<span class="ann" style="left:1573.6px;top:391px">18.</span>
<span class="ann" style="left:1683.9px;top:390px">19.</span>
<span class="ann" style="left:1384.9px;top:484px">20.</span>
<span class="ann" style="left:1445.1px;top:484px">21.</span>
<span class="ann" style="left:1523.4px;top:484px">22.</span>
</div>
</div>
</body>
</html>
